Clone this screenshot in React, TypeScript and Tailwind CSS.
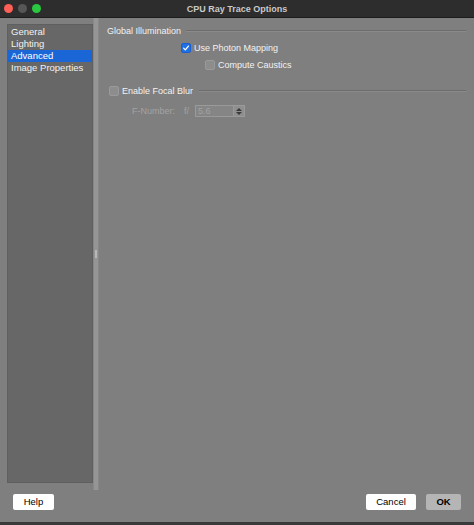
import { useState } from "react";

const PAGES = ["General", "Lighting", "Advanced", "Image Properties"];

function Check({ on, disabled }: { on: boolean; disabled?: boolean }) {
  return (
    <span
      className={`flex h-[10px] w-[10px] shrink-0 items-center justify-center rounded-[2px] border ${
        on
          ? "border-[#1b5fcf] bg-[#1f6fe5]"
          : disabled
            ? "border-[#959595] bg-[#8a8a8a]"
            : "border-[#9a9a9a] bg-[#8d8d8d]"
      }`}
    >
      {on && (
        <svg viewBox="0 0 10 10" className="h-[8px] w-[8px]" aria-hidden>
          <path
            d="M2 5.2 L4.1 7.4 L8 2.6"
            fill="none"
            stroke="#fff"
            strokeWidth="1.6"
            strokeLinecap="round"
            strokeLinejoin="round"
          />
        </svg>
      )}
    </span>
  );
}

function Groove() {
  return (
    <div className="flex flex-1 flex-col">
      <div className="h-px bg-[#6c6c6c]" />
      <div className="h-px bg-[#8b8b8b]" />
    </div>
  );
}

export default function App() {
  const [page, setPage] = useState("Advanced");
  const [photon, setPhoton] = useState(true);
  const [caustics, setCaustics] = useState(false);
  const [blur, setBlur] = useState(false);

  return (
    <div
      className="flex h-[525px] w-[474px] flex-col bg-[#7f7f7f] text-[9px] leading-[12px] text-[#f2f2f2]"
      style={{ fontFamily: '"Liberation Sans", Arial, sans-serif' }}
    >
      {/* title bar */}
      <div className="flex h-[18px] shrink-0 items-center border-b border-[#1c1c1c] bg-[#2d2d2d] px-[4px]">
        <div className="flex w-[60px] gap-[5px]">
          <span className="h-[9px] w-[9px] rounded-full bg-[#fe5f57]" />
          <span className="h-[9px] w-[9px] rounded-full bg-[#565656]" />
          <span className="h-[9px] w-[9px] rounded-full bg-[#2ac840]" />
        </div>
        <div className="flex-1 pr-[60px] text-center text-[9px] font-bold text-[#c9c9c9]">
          CPU Ray Trace Options
        </div>
      </div>

      <div className="flex min-h-0 flex-1">
        {/* page list */}
        <div className="w-[93px] shrink-0 pb-[7px] pl-[7px] pt-[6px]">
          <div className="h-full border border-[#5f5f5f] bg-[#676767] pt-[1px]">
            {PAGES.map((p) => (
              <div
                key={p}
                onClick={() => setPage(p)}
                className={`h-[12px] px-[3px] text-[9.5px] leading-[12px] ${
                  p === page ? "bg-[#1b66d6] text-white" : ""
                }`}
              >
                {p}
              </div>
            ))}
          </div>
        </div>

        {/* splitter */}
        <div className="flex w-[6px] shrink-0 items-center justify-center border-x border-[#888] bg-[#959595]">
          <div className="h-[8px] w-[2px] bg-[#b8b8b8]" />
        </div>

        {/* options */}
        <div className="flex-1 pl-[8px] pr-[8px] pt-[7px]">
          <div className="flex items-center gap-[5px]">
            <span>Global Illumination</span>
            <Groove />
          </div>
          <label className="mt-[5px] flex items-center gap-[3px] pl-[74px]">
            <span onClick={() => setPhoton(!photon)}>
              <Check on={photon} />
            </span>
            <span>Use Photon Mapping</span>
          </label>
          <label className="mt-[5px] flex items-center gap-[3px] pl-[98px]">
            <span onClick={() => setCaustics(!caustics)}>
              <Check on={caustics} />
            </span>
            <span>Compute Caustics</span>
          </label>

          <div className="mt-[14px] flex items-center gap-[3px] pl-[2px]">
            <span onClick={() => setBlur(!blur)}>
              <Check on={blur} />
            </span>
            <span className="pr-[3px]">Enable Focal Blur</span>
            <Groove />
          </div>
          <div className="mt-[8px] flex items-center pl-[25px] text-[#a3a3a3]">
            <span>F-Number:</span>
            <span className="ml-[9px]">f/</span>
            <div className="ml-[6px] flex h-[12px] items-stretch">
              <div className="w-[39px] border border-[#9a9a9a] bg-[#858585] pl-[2px] leading-[10px]">
                5.6
              </div>
              <div className="flex w-[11px] flex-col items-center justify-center gap-[1px] border border-l-0 border-[#9a9a9a] bg-[#8f8f8f]">
                <svg viewBox="0 0 6 3" className="h-[3px] w-[6px]" aria-hidden>
                  <path d="M0 3 L3 0 L6 3 Z" fill="#3a3a3a" />
                </svg>
                <svg viewBox="0 0 6 3" className="h-[3px] w-[6px]" aria-hidden>
                  <path d="M0 0 L3 3 L6 0 Z" fill="#3a3a3a" />
                </svg>
              </div>
            </div>
          </div>
        </div>
      </div>

      {/* buttons */}
      <div className="flex h-[35px] shrink-0 items-start border-b-[3px] border-[#3a3a3a] px-[13px] pt-[4px] text-black">
        <button className="h-[16px] w-[41px] rounded-[2px] bg-white text-[9.5px]">
          Help
        </button>
        <div className="flex-1" />
        <button className="h-[16px] w-[50px] rounded-[2px] bg-white text-[9.5px]">
          Cancel
        </button>
        <button className="ml-[10px] h-[16px] w-[35px] rounded-[2px] bg-[#b5b5b5] text-[9.5px] font-bold">
          OK
        </button>
      </div>
    </div>
  );
}
